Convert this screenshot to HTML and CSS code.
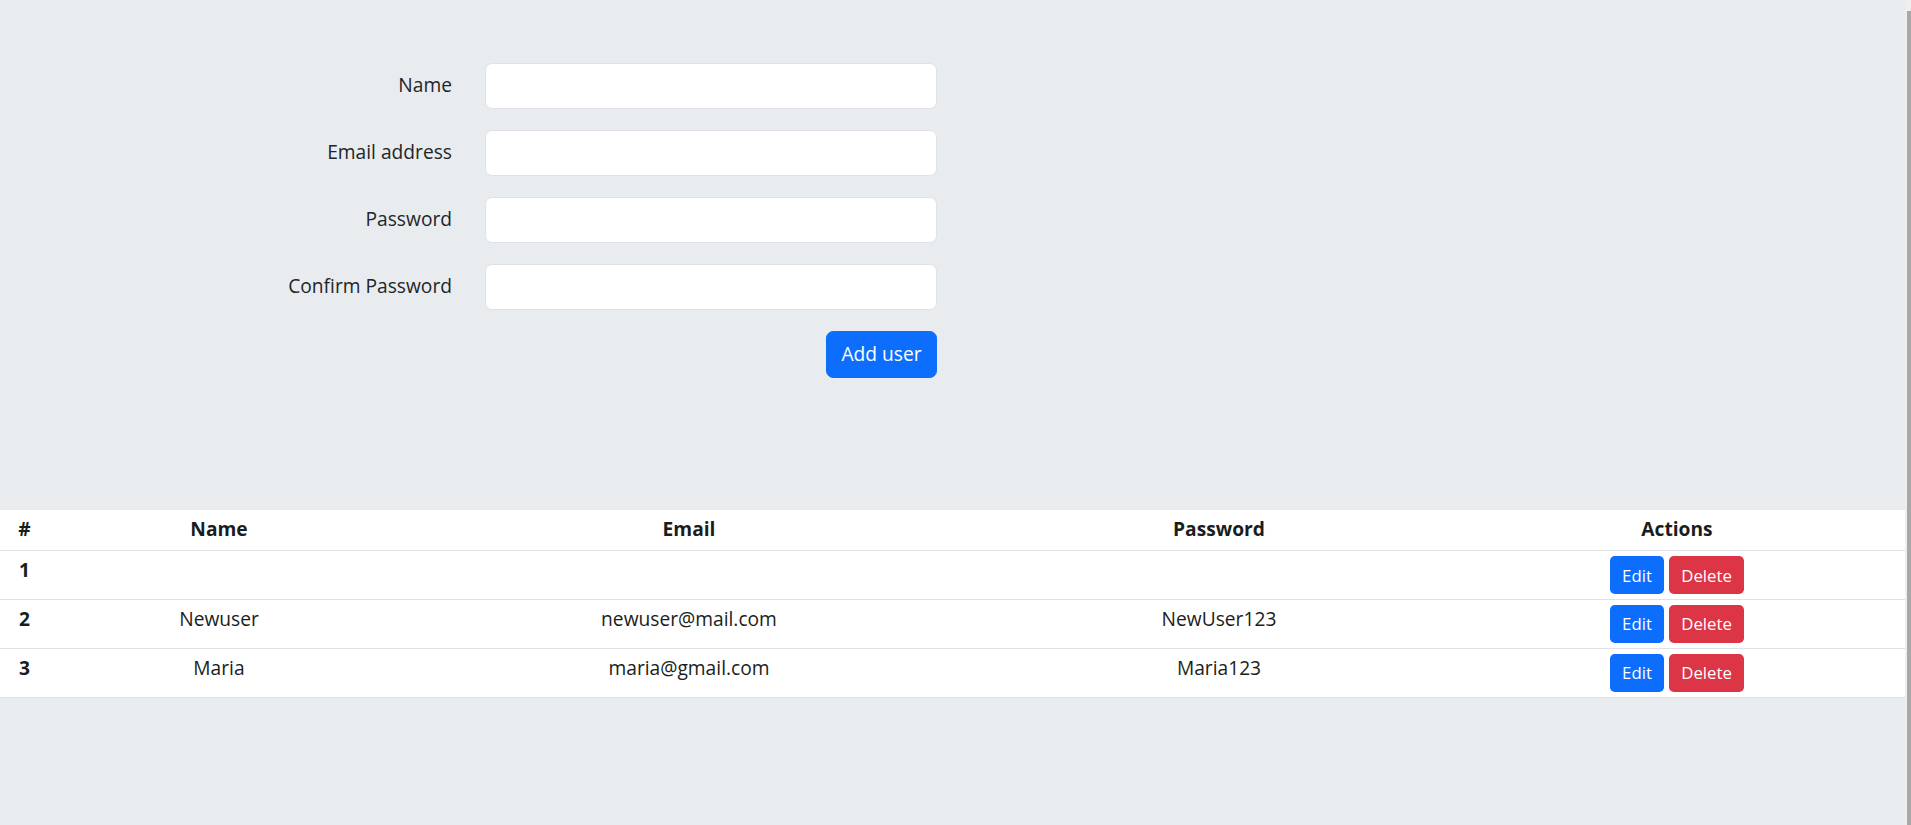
FILE: index.html
```html
<!DOCTYPE html>
<html lang="en">
<head>
<meta charset="utf-8">
<title>Users</title>
<link rel="stylesheet" href="styles.css">
</head>
<body>
<div class="page">
  <form class="user-form">
    <label class="form-label" for="name">Name</label>
    <input class="form-input" id="name" type="text">
    <label class="form-label" for="email">Email address</label>
    <input class="form-input" id="email" type="email">
    <label class="form-label" for="pass">Password</label>
    <input class="form-input" id="pass" type="password">
    <label class="form-label" for="confirm">Confirm Password</label>
    <input class="form-input" id="confirm" type="password">
    <div class="form-actions">
      <button type="button" class="btn btn-primary">Add user</button>
    </div>
  </form>

  <table class="users">
    <colgroup>
      <col class="c-num">
      <col class="c-name">
      <col class="c-email">
      <col class="c-pass">
      <col class="c-act">
    </colgroup>
    <thead>
      <tr class="head-row"><th>#</th><th>Name</th><th>Email</th><th>Password</th><th>Actions</th></tr>
    </thead>
    <tbody>
      <tr class="body-row">
        <th>1</th><td></td><td></td><td></td>
        <td><div class="row-actions"><button type="button" class="btn-sm btn-primary">Edit</button><button type="button" class="btn-sm btn-danger">Delete</button></div></td>
      </tr>
      <tr class="body-row">
        <th>2</th><td>Newuser</td><td>newuser@mail.com</td><td>NewUser123</td>
        <td><div class="row-actions"><button type="button" class="btn-sm btn-primary">Edit</button><button type="button" class="btn-sm btn-danger">Delete</button></div></td>
      </tr>
      <tr class="body-row">
        <th>3</th><td>Maria</td><td>maria@gmail.com</td><td>Maria123</td>
        <td><div class="row-actions"><button type="button" class="btn-sm btn-primary">Edit</button><button type="button" class="btn-sm btn-danger">Delete</button></div></td>
      </tr>
    </tbody>
  </table>
</div>
<div class="scrollbar"><div class="scroll-thumb"></div></div>
</body>
</html>
```
FILE: styles.css
```css
html, body {
  margin: 0;
  padding: 0;
}
body {
  display: flex;
  height: 825px;
  overflow: hidden;
  background: #e9ecef;
  font-family: "Open Sans", "Noto Sans", sans-serif;
  font-size: 19.2px;
  line-height: 1.5;
  color: #212529;
}
.page {
  flex: 1;
  min-width: 0;
}
.scrollbar {
  width: 6px;
  background: #efefef;
  padding-top: 11px;
  box-sizing: border-box;
  display: flex;
}
.scroll-thumb {
  flex: 1;
  margin-left: 2px;
  background: #a8a8a8;
}
.user-form {
  display: grid;
  grid-template-columns: 452px 452px;
  column-gap: 33px;
  row-gap: 21.4px;
  padding-top: 63px;
  margin: 0;
}
.form-label {
  text-align: right;
  align-self: center;
  font-size: 19.2px;
  color: #212529;
}
.form-input {
  height: 45.6px;
  box-sizing: border-box;
  border: 1.2px solid #dee2e6;
  border-radius: 7.2px;
  background: #fff;
  padding: 7.2px 14.4px;
  font: inherit;
  margin: 0;
}
.form-actions {
  grid-column: 2;
  display: flex;
  justify-content: flex-end;
}
.btn {
  height: 46.6px;
  padding: 0 14.4px;
  border: 1.2px solid transparent;
  border-radius: 7.2px;
  font-family: inherit;
  font-size: 19.2px;
  line-height: 1.5;
  color: #fff;
  cursor: pointer;
}
.btn-primary {
  background: #0d6efd;
  border-color: #0d6efd;
}
.btn-danger {
  background: #dc3545;
  border-color: #dc3545;
}
.users {
  margin-top: 132.4px;
  width: 100%;
  border-collapse: collapse;
  background: #fff;
  color: #1a1d20;
}
.c-num { width: 49px; }
.c-name { width: 340px; }
.c-email { width: 600px; }
.c-pass { width: 460px; }
.c-act { width: 456px; }
.head-row { height: 41px; }
.body-row { height: 48.8px; }
.users th,
.users td {
  padding: 4.8px 4.8px 0;
  text-align: center;
  vertical-align: top;
  border-bottom: 1.2px solid #dee2e6;
  font-size: 19.2px;
  line-height: 1.5;
}
.users th {
  font-weight: 700;
}
.row-actions {
  display: flex;
  justify-content: center;
  gap: 5.3px;
}
.btn-sm {
  height: 38px;
  padding: 0 11px;
  border: 1.2px solid transparent;
  border-radius: 4.8px;
  font-family: inherit;
  font-size: 16.8px;
  line-height: 1.5;
  color: #fff;
  cursor: pointer;
}
```
